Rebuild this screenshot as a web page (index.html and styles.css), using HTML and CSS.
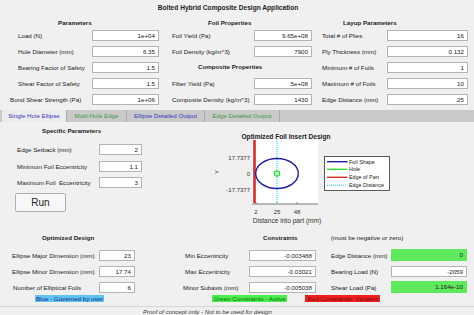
FILE: index.html
```html
<!DOCTYPE html>
<html lang="en">
<head>
  <meta charset="UTF-8" />
  <title>Bolted Hybrid Composite Design Application</title>
  <link rel="stylesheet" href="styles.css">
</head>
<body>

  <header class="top">
    <div class="title">Bolted Hybrid Composite Design Application</div>
    <div class="cols">
      <section class="group g1">
        <h2>Parameters</h2>
        <label>Load (N)</label><div class="box">1e+04</div>
        <label>Hole Diameter (mm)</label><div class="box">6.35</div>
        <label>Bearing Factor of Safety</label><div class="box">1.5</div>
        <label>Shear Factor of Safety</label><div class="box">1.5</div>
        <label class="wide">Bond Shear Strength (Pa)</label><div class="box">1e+06</div>
      </section>
      <section class="group g2">
        <h2>Foil Properties</h2>
        <label>Foil Yield (Pa)</label><div class="box">9.65e+08</div>
        <label>Foil Density (kg/m^3)</label><div class="box">7900</div>
        <h2 class="sub">Composite Properties</h2>
        <label>Fiber Yield (Pa)</label><div class="box">5e+08</div>
        <label>Composite Density (kg/m^3)</label><div class="box">1430</div>
      </section>
      <section class="group g3">
        <h2>Layup Parameters</h2>
        <label>Total # of Plies</label><div class="box">16</div>
        <label>Ply Thickness (mm)</label><div class="box">0.132</div>
        <label>Minimum # of Foils</label><div class="box">1</div>
        <label>Maximum # of Foils</label><div class="box">10</div>
        <label>Edge Distance (mm)</label><div class="box">25</div>
      </section>
    </div>
  </header>

  <nav class="tabs">
    <div class="tab active blue" style="width: 65px;">Single Hole Ellipse</div>
    <div class="tab green" style="width: 60px;">Multi-Hole Edge</div>
    <div class="tab blue" style="width: 78px;">Ellipse Detailed Output</div>
    <div class="tab green" style="width: 75px;">Edge Detailed Output</div>
  </nav>

  <main class="panel">
    <div class="upper">
      <section class="specific">
        <h2>Specific Parameters</h2>
        <div class="fields">
          <label>Edge Setback (mm)</label><div class="box">2</div>
          <label>Minimum Foil Eccentricity</label><div class="box">1.1</div>
          <label>Maximum Foil&nbsp; Eccentricity</label><div class="box">3</div>
        </div>
        <button class="run">Run</button>
      </section>

      <svg class="plot" width="190" height="100" viewBox="0 0 190 100">
        <text class="ptitle" x="81" y="10.5" text-anchor="middle">Optimized Foil Insert Design</text>
        <rect x="47" y="11" width="66" height="65" fill="#fff"/>
        <line x1="47" y1="76" x2="113" y2="76" stroke="#555" stroke-width="0.8"/>
        <line x1="51" y1="76" x2="51" y2="74" stroke="#555" stroke-width="0.6"/>
        <line x1="72" y1="76" x2="72" y2="74" stroke="#555" stroke-width="0.6"/>
        <line x1="92" y1="76" x2="92" y2="74" stroke="#555" stroke-width="0.6"/>
        <line x1="49.5" y1="12" x2="49.5" y2="75" stroke="#d92a2a" stroke-width="2.6"/>
        <line x1="72" y1="11" x2="72" y2="76" stroke="#3fe0e8" stroke-width="1.3" stroke-dasharray="1 1"/>
        <ellipse cx="72" cy="45.5" rx="21.3" ry="15" fill="none" stroke="#1f1fa8" stroke-width="1.4"/>
        <circle cx="72" cy="45.5" r="2.6" fill="none" stroke="#2fe02f" stroke-width="1.4"/>
        <text class="tick" x="45" y="31.5" text-anchor="end">17.7377</text>
        <text class="tick" x="45" y="47.5" text-anchor="end">0</text>
        <text class="tick" x="45" y="63.5" text-anchor="end">-17.7377</text>
        <text class="tick" x="14" y="44" text-anchor="middle" transform="rotate(-90 14 44)">Y</text>
        <text class="tick" x="51" y="86" text-anchor="middle">2</text>
        <text class="tick" x="72" y="86" text-anchor="middle">25</text>
        <text class="tick" x="92" y="86" text-anchor="middle">48</text>
        <text class="xlabel" x="82" y="94.5" text-anchor="middle">Distance into part (mm)</text>
        <rect x="119.5" y="28.5" width="65" height="34" fill="#fff" stroke="#333" stroke-width="0.8"/>
        <line x1="122" y1="33.7" x2="142.5" y2="33.7" stroke="#1f1fa8" stroke-width="1.4"/>
        <line x1="122" y1="41.3" x2="142.5" y2="41.3" stroke="#2fe02f" stroke-width="1.4"/>
        <line x1="122" y1="49.3" x2="142.5" y2="49.3" stroke="#d92a2a" stroke-width="1.4"/>
        <line x1="122" y1="57.3" x2="142.5" y2="57.3" stroke="#3fe0e8" stroke-width="1.2" stroke-dasharray="1 1"/>
        <text class="leg" x="144" y="35.5">Foil Shape</text>
        <text class="leg" x="144" y="43.1">Hole</text>
        <text class="leg" x="144" y="51.1">Edge of Part</text>
        <text class="leg" x="144" y="59.1">Edge Distance</text>
      </svg>
    </div>

    <div class="lower">
      <section class="group ga">
        <h2>Optimized Design</h2>
        <label>Ellipse Major Dimension (mm)</label><div class="box">23</div>
        <label>Ellipse Minor Dimension (mm)</label><div class="box">17.74</div>
        <label class="indent">Number of Elliptical Foils</label><div class="box">6</div>
      </section>
      <section class="group gb">
        <h2>Constraints</h2>
        <label>Min Eccentricity</label><div class="box">-0.003488</div>
        <label>Max Eccentricity</label><div class="box">-0.03021</div>
        <label class="out">Minor Subaxis (mm)</label><div class="box">-0.005038</div>
      </section>
      <section class="group gc">
        <h2 class="note">(must be negative or zero)</h2>
        <label>Edge Distance (mm)</label><div class="box ok">0</div>
        <label>Bearing Load (N)</label><div class="box">-2059</div>
        <label>Shear Load (Pa)</label><div class="box ok">1.164e-10</div>
      </section>
    </div>

    <div class="key">
      <span class="k-blue">Blue - Governed by user</span>
      <span class="k-green">Green Constraints - Active</span>
      <span class="k-red">Red Constraints- Violated</span>
    </div>
  </main>

  <footer class="foot">Proof of concept only - Not to be used for design</footer>

</body>
</html>
```

FILE: styles.css
```css
body {
  margin: 0;
  width: 474px;
  height: 315px;
  overflow: hidden;
  background: #f0f0f0;
  color: #222;
  font-family: "Liberation Sans", Arial, sans-serif;
  font-size: 6.2px;
}
h2 { margin: 0; font-size: 6.2px; font-weight: bold; color: #222; }
label { white-space: nowrap; }

/* top parameter panel */
.top { height: 110px; }
.title {
  height: 19px; padding-right: 18px; box-sizing: border-box;
  padding-top: 4px; line-height: 8px; text-align: center;
  font-weight: bold; font-size: 6.6px;
}
.cols { display: flex; }
.group {
  display: grid;
  grid-auto-rows: 16px;
  align-items: center;
}
.group h2 { grid-column: 1 / 3; }
.box {
  height: 11px; box-sizing: border-box;
  background: #fff; border: 1px solid #b4b4b4;
  text-align: right; padding-right: 3px; line-height: 9px;
}
.top .group { grid-template-rows: 8px; }
.top .group h2 { line-height: 8px; }
.g1 { margin-left: 18px; grid-template-columns: 74px 67px; }
.g1 h2 { padding-left: 40px; }
.g1 .wide { margin-left: -8px; }
.g2 { margin-left: 13px; grid-template-columns: 82px 58px; }
.g2 h2 { padding-left: 36px; }
.g2 h2.sub { padding-left: 26px; }
.g3 { margin-left: 10px; grid-template-columns: 65px 81px; }
.g3 h2 { padding-left: 21px; }

/* tab strip */
.tabs {
  display: flex; height: 12px; padding-left: 2px;
  background: #c9c9c9;
}
.tab {
  box-sizing: border-box; border-right: 1px solid #a9a9a9;
  line-height: 12px; text-align: center; white-space: nowrap;
}
.tab.active { background: #ececec; }
.blue { color: #3b35c8; }
.green { color: #3f9a4a; }

/* tab content */
.panel { height: 182px; }
.upper { display: flex; height: 108px; }
.specific { width: 205px; padding-left: 17px; box-sizing: border-box; }
.specific h2 { margin-top: 5px; line-height: 8px; padding-left: 25px; }
.fields {
  display: grid; grid-template-columns: 82px 43px;
  grid-template-rows: 17px 17px 15px; align-items: center;
  margin-top: 6px;
}
.fields .box { height: 11px; }
.run {
  display: block; margin: 3px 0 0 -2px; width: 51px; height: 19px;
  background: #f7f7f7; border: 1px solid #b0b0b0; border-radius: 2px;
  font-family: "Liberation Sans", Arial, sans-serif; font-size: 10px; color: #222;
  padding: 0;
}
.plot { margin-top: 6px; font-family: "Liberation Sans", Arial, sans-serif; }
.ptitle { font-size: 6.6px; font-weight: bold; fill: #222; }
.tick { font-size: 6px; fill: #333; }
.xlabel { font-size: 6.6px; fill: #333; }
.leg { font-size: 5.4px; fill: #222; }

.lower { display: flex; height: 65px; }
.lower .group { grid-template-rows: 17px; }
.lower .group h2 { align-self: start; line-height: 16px; }
.ga { margin-left: 12px; grid-template-columns: 87px 36px; }
.ga h2 { padding-left: 30px; }
.ga .indent { padding-left: 1px; }
.gb { margin-left: 50px; grid-template-columns: 64px 67px; }
.gb h2 { padding-left: 78px; }
.gb .out { margin-left: -2px; }
.gc { margin-left: 15px; grid-template-columns: 60px 76px; }
.gc h2.note { font-weight: normal; }
.box.ok { background: #5ee85e; border-color: #5ee85e; height: 12px; }

.key { display: flex; height: 7px; line-height: 7px; }
.key span { text-align: center; white-space: nowrap; }
.k-blue { margin-left: 35px; width: 69px; background: #5ec4f2; color: #1a2a80; }
.k-green { margin-left: 108px; width: 75px; background: #4cf04c; color: #0d6a0d; }
.k-red { margin-left: 18px; width: 75px; background: #ee2020; color: #7a0a0a; }

.foot {
  margin-top: 2px; border-top: 1px solid #d6d6d6;
  height: 11px; line-height: 10px; box-sizing: border-box;
  padding-left: 143px; font-style: italic; font-size: 6px; color: #333;
}
```
